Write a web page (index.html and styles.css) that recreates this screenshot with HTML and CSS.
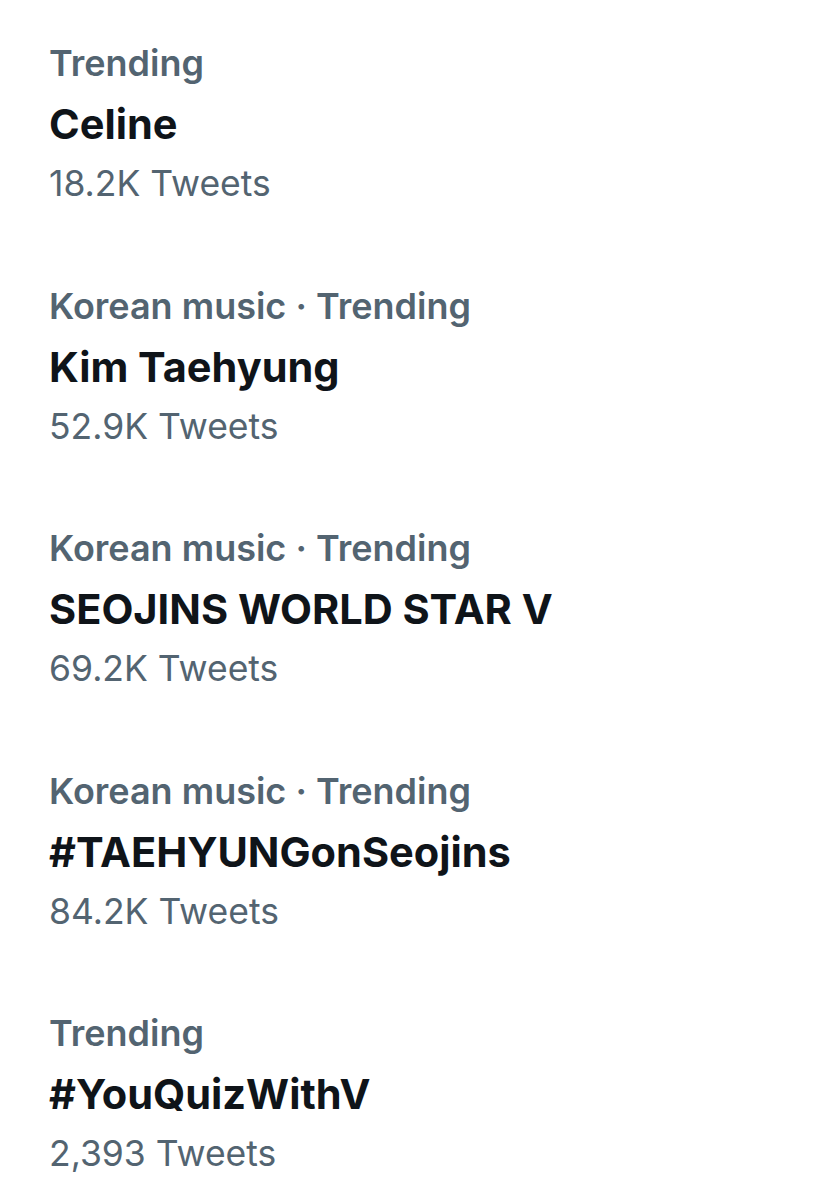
FILE: index.html
```html
<!DOCTYPE html>
<html>
<head>
<meta charset="utf-8">
<link rel="stylesheet" href="styles.css">
</head>
<body>
<ul class="trends">
  <li class="trend">
    <div class="meta">Trending</div>
    <div class="title">Celine</div>
    <div class="count">18.2K Tweets</div>
  </li>
  <li class="trend">
    <div class="meta">Korean music · Trending</div>
    <div class="title">Kim Taehyung</div>
    <div class="count">52.9K Tweets</div>
  </li>
  <li class="trend">
    <div class="meta">Korean music · Trending</div>
    <div class="title">SEOJINS WORLD STAR V</div>
    <div class="count">69.2K Tweets</div>
  </li>
  <li class="trend">
    <div class="meta">Korean music · Trending</div>
    <div class="title">#TAEHYUNGonSeojins</div>
    <div class="count">84.2K Tweets</div>
  </li>
  <li class="trend">
    <div class="meta">Trending</div>
    <div class="title">#YouQuizWithV</div>
    <div class="count">2,393 Tweets</div>
  </li>
</ul>
</body>
</html>
```
FILE: styles.css
```css
html, body {
  margin: 0;
  padding: 0;
  background: #ffffff;
}
body {
  font-family: Inter, "Liberation Sans", Arial, sans-serif;
  width: 822px;
  height: 1200px;
  overflow: hidden;
}
.trends {
  list-style: none;
  margin: 0;
  padding: 34px 0 0 49px;
  display: flex;
  flex-direction: column;
  gap: 65.5px;
}
.trend {
  display: flex;
  flex-direction: column;
}
.meta {
  font-size: 36px;
  line-height: 58px;
  font-weight: 600;
  color: #536471;
}
.title {
  font-size: 41.5px;
  line-height: 65px;
  font-weight: 700;
  color: #0f1419;
}
.count {
  font-size: 35.5px;
  line-height: 54px;
  font-weight: 400;
  color: #536471;
}
```
